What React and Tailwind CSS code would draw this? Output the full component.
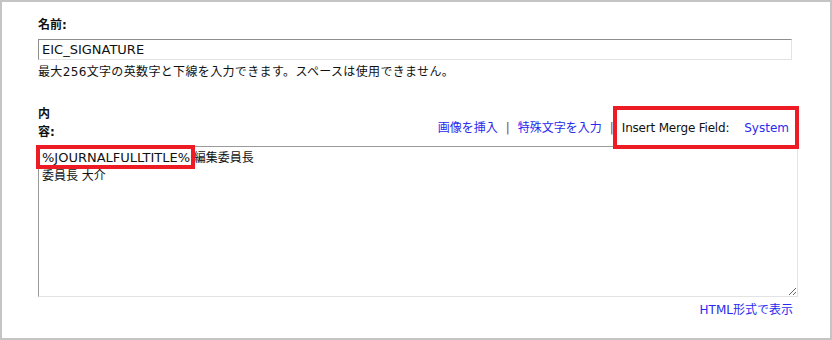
export default function App() {
  return (
    <div className="relative w-[832px] h-[340px] border-2 border-[#c4c4c4] bg-white font-['DejaVu_Sans','Noto_Sans_CJK_JP',sans-serif] text-[12px] leading-[18px] text-[#111]">
      <div className="pl-[36px] pr-[32px] pt-[14px]">
        {/* name field */}
        <div className="font-bold">名前:</div>
        <input
          readOnly
          value="EIC_SIGNATURE"
          className="mt-[5px] block w-[754px] h-[21px] px-[3px] border border-t-[#8e8e8e] border-l-[#8e8e8e] border-r-[#e3e3e3] border-b-[#e3e3e3] text-[13px] text-[#111] outline-none font-['DejaVu_Sans','Noto_Sans_CJK_JP',sans-serif]"
        />
        <div className="mt-[3px] tracking-[0.35px]">最大256文字の英数字と下線を入力できます。スペースは使用できません。</div>

        {/* content header */}
        <div className="mt-[24px] flex justify-between">
          <div className="w-[18px] font-bold">内容:</div>
          <div className="mt-[9px] mr-[9px] flex items-center">
            <span className="text-[#2a2aee]">画像を挿入</span>
            <span className="mx-[8px] text-[#8a4a22]">|</span>
            <span className="text-[#2a2aee]">特殊文字を入力</span>
            <span className="mx-[8px] text-[#8a4a22]">|</span>
            <span className="tracking-[-0.2px]">Insert Merge Field:</span>
            <span className="ml-[15px] text-[#2a2aee]">System</span>
          </div>
        </div>

        {/* content body */}
        <div className="mt-[5px] w-[760px] h-[151px] px-[3px] py-[2px] border border-t-[#9a9a9a] border-l-[#9a9a9a] border-r-[#e3e3e3] border-b-[#e3e3e3] resize overflow-auto">
          <div>
            <span className="text-[13px]">%JOURNALFULLTITLE%</span> 編集委員長
          </div>
          <div>委員長 大介</div>
        </div>
        <div className="mt-[4px] pr-[5px] text-right text-[#2a2aee]">HTML形式で表示</div>
      </div>

      {/* annotation boxes */}
      <div className="absolute left-[611px] top-[104px] w-[186px] h-[43px] border-4 border-[#ed1c24]" />
      <div className="absolute left-[34px] top-[143px] w-[159px] h-[24px] border-4 border-[#ed1c24]" />
    </div>
  );
}
